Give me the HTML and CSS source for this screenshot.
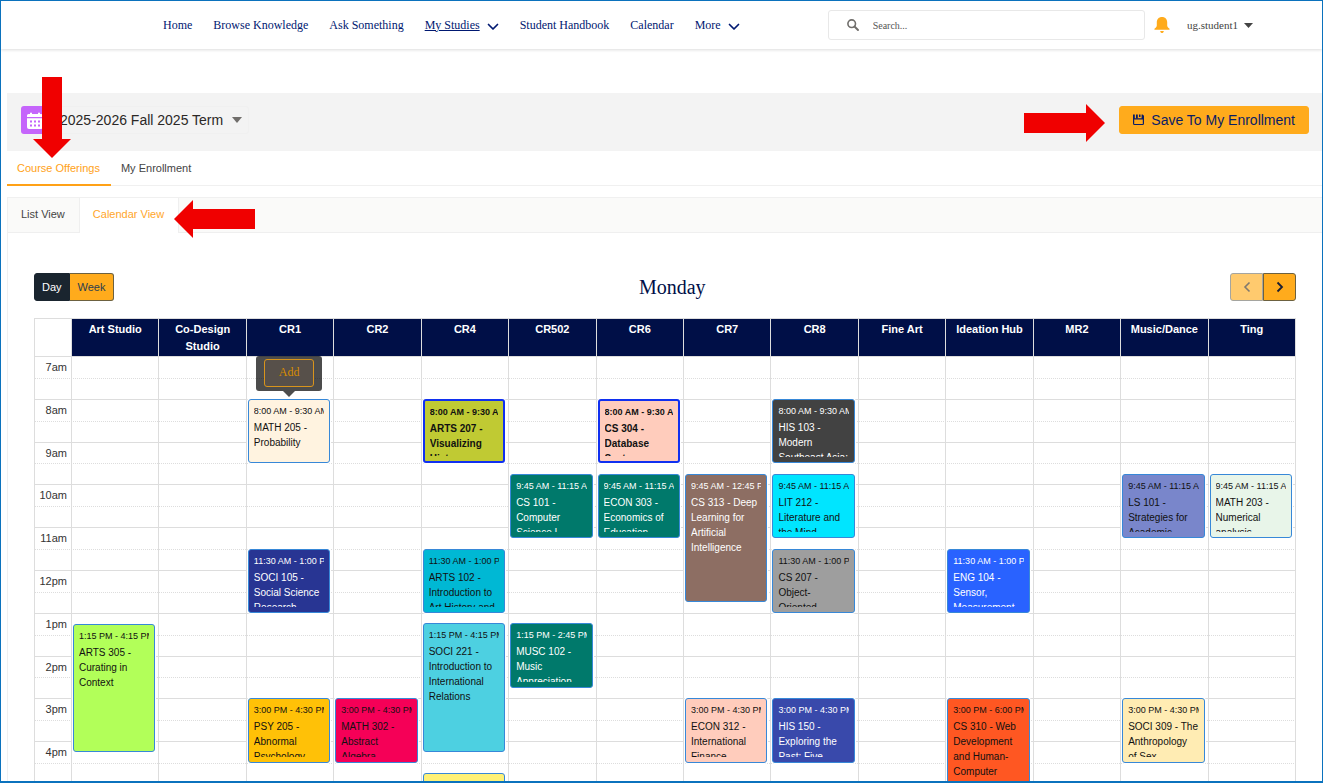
FILE: index.html
```html
<!DOCTYPE html>
<html lang="en">
<head>
<meta charset="utf-8">
<meta name="viewport" content="width=device-width, initial-scale=1">
<title>Course Offerings</title>
<link rel="stylesheet" href="styles.css">
</head>
<body>
<div class="frame">
  <header class="topbar">
    <nav class="nav" aria-label="Main">
      <a href="#">Home</a>
      <a href="#">Browse Knowledge</a>
      <a href="#">Ask Something</a>
      <a href="#" class="has-menu current"><span>My Studies</span><svg width="12" height="8" viewBox="0 0 12 8"><path d="M1.500 1.500L6 6L10.500 1.500" fill="none" stroke="currentColor" stroke-width="1.700" stroke-linecap="round" stroke-linejoin="round"/></svg></a>
      <a href="#">Student Handbook</a>
      <a href="#">Calendar</a>
      <a href="#" class="has-menu"><span>More</span><svg width="12" height="8" viewBox="0 0 12 8"><path d="M1.500 1.500L6 6L10.500 1.500" fill="none" stroke="currentColor" stroke-width="1.700" stroke-linecap="round" stroke-linejoin="round"/></svg></a>
    </nav>
    <label class="search">
      <svg width="12" height="12" viewBox="0 0 12 12"><circle cx="4.700" cy="4.700" r="3.800" fill="none" stroke="#706e6b" stroke-width="1.600"/><path d="M7.500 7.500L11 11" stroke="#706e6b" stroke-width="1.900" stroke-linecap="round"/></svg>
      <input type="search" placeholder="Search..." aria-label="Search">
    </label>
    <button class="bell" type="button" aria-label="Notifications"><svg width="16" height="16" viewBox="0 0 16 16" fill="#ffab1c"><path d="M8 0C4.800 0 2.800 2.200 2.800 5.300V8.500C2.800 9.700 2 10.600 1 11.200C.1 11.700.2 12.800 1.200 12.800H14.800C15.800 12.800 15.900 11.700 15 11.200C14 10.600 13.200 9.700 13.200 8.500V5.300C13.200 2.200 11.200 0 8 0Z"/><path d="M6.200 13.900H9.800C9.600 15.300 8.900 15.900 8 15.900S6.400 15.300 6.200 13.900Z"/></svg></button>
    <button class="user" type="button">ug.student1<svg width="9" height="5" viewBox="0 0 9 5"><path d="M0 0H9L4.500 5Z" fill="#444"/></svg></button>
  </header>

  <main class="page">
    <section class="term-bar">
      <span class="term-icon"><svg width="16" height="17" viewBox="0 0 16 17"><path d="M3 1.200C3 .4 5 .4 5 1.200V2H11V1.200C11 .4 13 .4 13 1.200V2H14.500Q16 2 16 3.500V5H0V3.500Q0 2 1.500 2H3Z" fill="#fff"/><path d="M0 6.200H16V15Q16 17 14 17H2Q0 17 0 15Z" fill="#fff"/><path d="M3 8.500H5V10.500H3ZM7 8.500H9V10.500H7ZM11 8.500H13V10.500H11ZM3 12.500H5V14.500H3ZM7 12.500H9V14.500H7ZM11 12.500H13V14.500H11Z" fill="#c565fb"/></svg></span>
      <button class="term-picker" type="button">2025-2026 Fall 2025 Term<svg width="10" height="6" viewBox="0 0 10 6"><path d="M0 0H10L5 6Z" fill="#706e6b"/></svg></button>
      <svg class="arrow-right" width="81" height="38" viewBox="0 0 81 38"><path d="M0 9H62V0L81 19L62 38V29H0Z" fill="#f00000"/></svg>
      <button class="save" type="button"><svg width="11" height="11" viewBox="0 0 11 11"><path d="M0 0.500H1.800V4.200H8.600V0.500H9.600L11 1.800V9.500Q11 11 9.500 11H1.500Q0 11 0 9.500ZM1.200 5.500V9.900H9.800V5.500Z" fill="#0a1d66" fill-rule="evenodd"/><path d="M3 0.500H4.800V4.500H3ZM6 0.500H7.500V3H6Z" fill="#0a1d66"/></svg>Save To My Enrollment</button>
      <svg class="arrow-down" width="38" height="81" viewBox="0 0 38 81"><path d="M9 0H29V62H38L19 81L0 62H9Z" fill="#f00000"/></svg>
    </section>

    <div class="tabs">
      <button class="tab active" type="button">Course Offerings</button>
      <button class="tab" type="button">My Enrollment</button>
    </div>

    <section class="panel">
      <div class="views">
        <button class="view" type="button">List View</button>
        <button class="view active" type="button">Calendar View</button>
        <svg class="arrow-left" width="81" height="38" viewBox="0 0 81 38"><path d="M81 9H19V0L0 19L19 38V29H81Z" fill="#f00000"/></svg>
      </div>

      <div class="calendar">
        <div class="toolbar">
          <div class="group">
            <button class="seg pressed" type="button">Day</button><button class="seg" type="button">Week</button>
          </div>
          <h2>Monday</h2>
          <div class="group">
            <button class="seg step" type="button" disabled aria-label="Previous day"><svg width="8" height="12" viewBox="0 0 8 12"><path d="M6.500 1.500L2 6L6.500 10.500" fill="none" stroke="currentColor" stroke-width="1.600"/></svg></button><button class="seg step" type="button" aria-label="Next day"><svg width="8" height="12" viewBox="0 0 8 12"><path d="M1.500 1.500L6 6L1.500 10.500" fill="none" stroke="currentColor" stroke-width="1.800"/></svg></button>
          </div>
        </div>

        <div class="rooms">
          <span class="corner"></span>
          <span class="room">Art Studio</span>
          <span class="room">Co-Design Studio</span>
          <span class="room">CR1</span>
          <span class="room">CR2</span>
          <span class="room">CR4</span>
          <span class="room">CR502</span>
          <span class="room">CR6</span>
          <span class="room">CR7</span>
          <span class="room">CR8</span>
          <span class="room">Fine Art</span>
          <span class="room">Ideation Hub</span>
          <span class="room">MR2</span>
          <span class="room">Music/Dance</span>
          <span class="room">Ting</span>
        </div>

        <div class="day">
          <div class="hours">
            <div class="hour"><span>7am</span></div>
            <div class="hour"><span>8am</span></div>
            <div class="hour"><span>9am</span></div>
            <div class="hour"><span>10am</span></div>
            <div class="hour"><span>11am</span></div>
            <div class="hour"><span>12pm</span></div>
            <div class="hour"><span>1pm</span></div>
            <div class="hour"><span>2pm</span></div>
            <div class="hour"><span>3pm</span></div>
            <div class="hour"><span>4pm</span></div>
          </div>
          <div class="lanes">
            <div class="lane axis"></div>
            <div class="lane">
              <a href="#" class="event lime" style="--from:26;--to:38"><div class="clip"><time>1:15 PM - 4:15 PM</time><p>ARTS 305 - Curating in Context</p></div></a>
            </div>
            <div class="lane"></div>
            <div class="lane">
              <div class="event cream" style="--from:5;--to:11"><div class="clip"><time>8:00 AM - 9:30 AM</time><p>MATH 205 - Probability</p></div>
                <div class="popover"><button type="button">Add</button></div>
              </div>
              <a href="#" class="event navy" style="--from:19;--to:25"><div class="clip"><time>11:30 AM - 1:00 PM</time><p>SOCI 105 - Social Science Research</p></div></a>
              <a href="#" class="event amber" style="--from:33;--to:39"><div class="clip"><time>3:00 PM - 4:30 PM</time><p>PSY 205 - Abnormal Psychology</p></div></a>
            </div>
            <div class="lane">
              <a href="#" class="event pink" style="--from:33;--to:39"><div class="clip"><time>3:00 PM - 4:30 PM</time><p>MATH 302 - Abstract Algebra</p></div></a>
            </div>
            <div class="lane">
              <a href="#" class="event olive enrolled" style="--from:5;--to:11"><div class="clip"><time>8:00 AM - 9:30 AM</time><p>ARTS 207 - Visualizing History</p></div></a>
              <a href="#" class="event cyan" style="--from:19;--to:25"><div class="clip"><time>11:30 AM - 1:00 PM</time><p>ARTS 102 - Introduction to Art History and</p></div></a>
              <a href="#" class="event aqua" style="--from:26;--to:38"><div class="clip"><time>1:15 PM - 4:15 PM</time><p>SOCI 221 - Introduction to International Relations</p></div></a>
              <a href="#" class="event yellow" style="--from:40;--to:46" aria-label="Evening class"></a>
            </div>
            <div class="lane">
              <a href="#" class="event teal" style="--from:12;--to:18"><div class="clip"><time>9:45 AM - 11:15 AM</time><p>CS 101 - Computer Science I</p></div></a>
              <a href="#" class="event teal" style="--from:26;--to:32"><div class="clip"><time>1:15 PM - 2:45 PM</time><p>MUSC 102 - Music Appreciation</p></div></a>
            </div>
            <div class="lane">
              <a href="#" class="event peach enrolled" style="--from:5;--to:11"><div class="clip"><time>8:00 AM - 9:30 AM</time><p>CS 304 - Database Systems</p></div></a>
              <a href="#" class="event teal" style="--from:12;--to:18"><div class="clip"><time>9:45 AM - 11:15 AM</time><p>ECON 303 - Economics of Education</p></div></a>
            </div>
            <div class="lane">
              <a href="#" class="event brown" style="--from:12;--to:24"><div class="clip"><time>9:45 AM - 12:45 PM</time><p>CS 313 - Deep Learning for Artificial Intelligence</p></div></a>
              <a href="#" class="event peach" style="--from:33;--to:39"><div class="clip"><time>3:00 PM - 4:30 PM</time><p>ECON 312 - International Finance</p></div></a>
            </div>
            <div class="lane">
              <a href="#" class="event charcoal" style="--from:5;--to:11"><div class="clip"><time>8:00 AM - 9:30 AM</time><p>HIS 103 - Modern Southeast Asia:</p></div></a>
              <a href="#" class="event bright" style="--from:12;--to:18"><div class="clip"><time>9:45 AM - 11:15 AM</time><p>LIT 212 - Literature and the Mind</p></div></a>
              <a href="#" class="event gray" style="--from:19;--to:25"><div class="clip"><time>11:30 AM - 1:00 PM</time><p>CS 207 - Object-Oriented</p></div></a>
              <a href="#" class="event indigo" style="--from:33;--to:39"><div class="clip"><time>3:00 PM - 4:30 PM</time><p>HIS 150 - Exploring the Past: Five</p></div></a>
            </div>
            <div class="lane"></div>
            <div class="lane">
              <a href="#" class="event blue" style="--from:19;--to:25"><div class="clip"><time>11:30 AM - 1:00 PM</time><p>ENG 104 - Sensor, Measurement</p></div></a>
              <a href="#" class="event orange" style="--from:33;--to:45"><div class="clip"><time>3:00 PM - 6:00 PM</time><p>CS 310 - Web Development and Human-Computer</p></div></a>
            </div>
            <div class="lane"></div>
            <div class="lane">
              <a href="#" class="event lavender" style="--from:12;--to:18"><div class="clip"><time>9:45 AM - 11:15 AM</time><p>LS 101 - Strategies for Academic</p></div></a>
              <a href="#" class="event butter" style="--from:33;--to:39"><div class="clip"><time>3:00 PM - 4:30 PM</time><p>SOCI 309 - The Anthropology of&nbsp;Sex</p></div></a>
            </div>
            <div class="lane">
              <a href="#" class="event mint" style="--from:12;--to:18"><div class="clip"><time>9:45 AM - 11:15 AM</time><p>MATH 203 - Numerical analysis</p></div></a>
            </div>
          </div>
        </div>
      </div>
    </section>
  </main>
</div>
</body>
</html>
```
FILE: styles.css
```css
* { box-sizing: border-box; }

body {
  margin: 0;
  background: #fff;
  color: #1f1f1f;
  font: 11px "Liberation Sans", Arial, sans-serif;
}

button { font: inherit; cursor: pointer; }
a { color: inherit; text-decoration: none; }
svg { display: block; flex: none; }

.frame {
  height: 100vh;
  overflow: hidden;
  border: 1px solid #0b72bd;
  border-bottom-width: 2px;
}

/* Top navigation */
.topbar {
  display: flex;
  align-items: center;
  height: 48px;
  padding: 0 69px 0 162px;
  box-shadow: 0 1px 3px rgba(0, 0, 0, 0.14);
  font-family: "Liberation Serif", "Times New Roman", serif;
}

.nav {
  display: flex;
  gap: 21px;
  color: #001871;
  font-size: 12px;
  white-space: nowrap;
}

.has-menu { display: flex; align-items: center; gap: 7px; }
.has-menu svg { margin-top: 3px; }
.current span { text-decoration: underline; }

.search {
  display: flex;
  flex: 1;
  align-items: center;
  gap: 14px;
  height: 30px;
  margin-left: 88px;
  padding: 0 18px;
  border: 1px solid #e8e8e8;
  border-radius: 3px;
}

.search input {
  flex: 1;
  min-width: 0;
  padding: 0;
  border: 0;
  outline: 0;
  background: none;
  font: 10px "Liberation Serif", "Times New Roman", serif;
}

.search input::placeholder { color: #555; opacity: 1; }

.bell, .user {
  padding: 0;
  border: 0;
  background: none;
}

.bell { margin: 0 17px 0 9px; }

.user {
  display: flex;
  align-items: center;
  gap: 6px;
  color: #444;
  font-size: 11px;
}

/* Term header */
.page { padding: 44px 0 0 6px; }

.term-bar {
  position: relative;
  display: flex;
  align-items: center;
  height: 58px;
  padding: 0 13px 4px 14px;
  background: #f3f3f3;
}

.term-icon {
  display: grid;
  place-items: center;
  width: 28px;
  height: 28px;
  border-radius: 3px;
  background: #c565fb;
}

.term-picker {
  display: flex;
  align-items: center;
  gap: 9px;
  height: 28px;
  padding: 0 6px 1px 10px;
  border: 1px solid #f0f0f0;
  border-radius: 3px;
  background: none;
  color: #2b2826;
  font-size: 14px;
}

.arrow-right { margin: 6px 14px 0 auto; }

.arrow-down {
  position: absolute;
  top: -16px;
  left: 26px;
  z-index: 2;
}

.save {
  display: flex;
  align-items: center;
  gap: 7px;
  height: 28px;
  padding: 0 13px 1px;
  border: 1px solid #ffab1c;
  border-radius: 3px;
  background: #ffab1c;
  color: #0a1d66;
  font-size: 14px;
}

/* Tabs */
.tabs {
  display: flex;
  height: 35px;
  border-bottom: 1px solid #f0f0f0;
}

.tab {
  height: 35px;
  padding: 0 11px 0 10px;
  border: 0;
  border-bottom: 2px solid transparent;
  background: none;
  color: #444;
}

.tab.active { border-bottom-color: #ffa116; color: #ffa116; }

.panel {
  margin-top: 11px;
  border: 1px solid #f0f0f0;
  border-width: 1px 0 0 1px;
}

.views {
  display: flex;
  align-items: flex-start;
  position: relative;
  height: 35px;
  border-bottom: 1px solid #efefef;
  background: #fafaf9;
}

.view {
  height: 34px;
  padding: 0 14px 2px 13px;
  border: 0;
  border-right: 1px solid #efefef;
  background: none;
  color: #444;
}

.view.active {
  height: 35px;
  padding-bottom: 3px;
  background: #fff;
  color: #ffa62b;
}

.arrow-left {
  position: absolute;
  top: 2px;
  left: 166px;
}

/* Calendar */
.calendar { padding: 40px 26px 0 26px; }

.toolbar {
  display: flex;
  align-items: center;
  justify-content: space-between;
  margin-bottom: 17px;
}

.toolbar h2 {
  margin: 0;
  color: #000f47;
  font: 20px/24px "Liberation Serif", "Times New Roman", serif;
}

.group { display: flex; }

.seg {
  height: 28px;
  padding: 0 8px;
  border: 1px solid #6c6140;
  border-left-width: 0;
  border-radius: 0 3px 3px 0;
  background: #ffab1c;
  color: #2c3e50;
}

.seg:first-child { border-left-width: 1px; border-radius: 3px 0 0 3px; }
.seg.pressed { padding: 0 7px; border-color: #1a252f; background: #1a252f; color: #fff; }
.step { display: grid; place-items: center; width: 33px; color: #1a1f33; }
.step:disabled { border-color: #a5a5a0; background: #ffca6e; color: #80796f; }
.step:disabled + .step { border-left-width: 1px; }

.rooms, .lanes {
  display: grid;
  grid-template-columns: 38px repeat(14, minmax(0, 1fr));
}

.rooms { border-top: 1px solid #ddd; }

.corner { border-right: 1px solid #ddd; border-left: 1px solid #ddd; }

.room {
  min-height: 37px;
  padding: 2px 6px 0;
  border-right: 1px solid #ddd;
  background: #000f47;
  color: #fff;
  font-weight: bold;
  line-height: 17px;
  text-align: center;
}

.day { display: grid; height: 642px; }
.hours, .lanes { grid-area: 1 / 1; min-height: 0; }

.hours { display: grid; grid-template-rows: repeat(15, 1fr); }

.hour {
  display: grid;
  grid-template-rows: 1fr 1fr;
  min-height: 0;
  border-top: 1px solid #ddd;
  color: #333;
}

.hour span {
  width: 33px;
  min-height: 0;
  line-height: 20px;
  text-align: right;
}

.hour::after { content: ""; border-top: 1px dotted #ddd; }

.lane {
  display: grid;
  grid-template-rows: repeat(60, minmax(0, 1fr));
  grid-template-columns: minmax(0, 1fr);
  min-height: 0;
  border-right: 1px solid #ddd;
}

.axis { border-left: 1px solid #ddd; }

.event {
  position: relative;
  grid-row: var(--from) / var(--to);
  grid-column: 1;
  min-height: 0;
  margin: 0 3px 0 1px;
  padding: 4px 5px 5px;
  border: 1px solid #3788d8;
  border-radius: 3px;
  box-shadow: 0 0 0 1px #fff;
  color: #111;
}

.clip { height: 100%; overflow: hidden; }

.event time {
  display: block;
  margin-bottom: 2px;
  font-size: 9px;
  line-height: 14px;
  white-space: nowrap;
}

.event p { margin: 0; font-size: 10px; line-height: 15px; }

.enrolled { border: 2px solid #1030f0; font-weight: bold; }

.lime { background: #b2ff59; }
.cream { background: #fff3e0; }
.navy { background: #283593; color: #fff; }
.amber { background: #ffc107; }
.pink { background: #f50057; }
.olive { background: #c0ca33; }
.cyan { background: #00b8d4; }
.aqua { background: #4dd0e1; }
.yellow { background: #fff176; }
.teal { background: #00796b; color: #fff; }
.peach { background: #ffccbc; }
.brown { background: #8d6e63; color: #fff; }
.charcoal { background: #424242; color: #fff; }
.bright { background: #00e5ff; }
.gray { background: #9e9e9e; }
.indigo { background: #3949ab; color: #fff; }
.blue { background: #2962ff; color: #fff; }
.orange { background: #ff5722; }
.lavender { background: #7986cb; }
.butter { background: #ffecb3; }
.mint { background: #e8f5e9; }

/* Popover above an event */
.popover {
  position: absolute;
  bottom: 100%;
  left: 50%;
  margin-bottom: 9px;
  padding: 3px 8px 4px;
  border-radius: 3px;
  background: rgba(0, 0, 0, 0.7);
  transform: translateX(-50%);
}

.popover::after {
  content: "";
  position: absolute;
  top: 100%;
  left: 50%;
  margin-left: -6px;
  border: 6px solid transparent;
  border-top-color: rgba(0, 0, 0, 0.7);
  border-bottom-width: 0;
}

.popover button {
  display: block;
  width: 50px;
  height: 28px;
  padding: 0;
  border: 1px solid #d8941c;
  border-radius: 3px;
  background: #57504a;
  color: #d88c00;
  font: 12px "Liberation Serif", "Times New Roman", serif;
}
```
